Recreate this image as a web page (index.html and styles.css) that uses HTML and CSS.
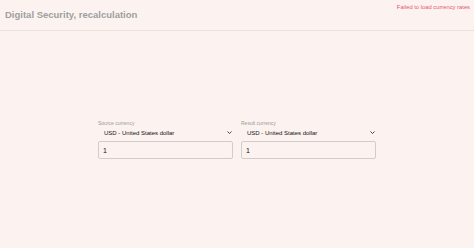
FILE: index.html
```html
<!DOCTYPE html>
<html lang="en">
<head>
<meta charset="UTF-8" />
<title>Digital Security, recalculation</title>
<link rel="stylesheet" href="styles.css">
</head>
<body>

<div class="page">
  <header class="top-bar">
    <h1 class="title">Digital Security, recalculation</h1>
    <div class="error-msg">Failed to load currency rates</div>
  </header>

  <main class="content">
    <form class="converter">
      <div class="field">
        <label class="field-label" for="srcCur">Source currency</label>
        <div class="select-wrap">
          <select id="srcCur" class="cur-select">
            <option>USD - United States dollar</option>
          </select>
          <svg class="chevron" viewBox="0 0 10 6" width="5" height="3"><path d="M1 1l4 4 4-4" fill="none" stroke="#333" stroke-width="1.8"/></svg>
        </div>
        <input class="amount" type="text" value="1">
      </div>
      <div class="field">
        <label class="field-label" for="resCur">Result currency</label>
        <div class="select-wrap">
          <select id="resCur" class="cur-select">
            <option>USD - United States dollar</option>
          </select>
          <svg class="chevron" viewBox="0 0 10 6" width="5" height="3"><path d="M1 1l4 4 4-4" fill="none" stroke="#333" stroke-width="1.8"/></svg>
        </div>
        <input class="amount" type="text" value="1">
      </div>
    </form>
  </main>
</div>

</body>
</html>
```

FILE: styles.css
```css
html, body { margin: 0; padding: 0; height: 100%; }
body {
  background: #fcf3f0;
  font-family: "Liberation Sans", Arial, sans-serif;
  color: #333;
}
.page {
  display: flex;
  flex-direction: column;
  height: 100%;
}
.top-bar {
  display: flex;
  justify-content: space-between;
  align-items: flex-start;
  height: 31px;
  padding: 0 4px 0 5px;
  border-bottom: 1px solid #ebe0dd;
  box-sizing: border-box;
  flex: none;
}
.title {
  margin: 0;
  padding-top: 9px;
  font-size: 9.5px;
  line-height: 12px;
  font-weight: bold;
  color: #a09e9e;
}
.error-msg {
  padding-top: 4px;
  font-size: 5.8px;
  line-height: 7px;
  color: #e8546a;
}
.content {
  flex: 1;
  display: flex;
  align-items: center;
  justify-content: center;
}
.converter {
  display: flex;
  gap: 8px;
}
.field {
  display: flex;
  flex-direction: column;
  width: 135px;
}
.field-label {
  font-size: 5px;
  line-height: 6px;
  color: #999;
  margin-bottom: 1px;
}
.select-wrap {
  position: relative;
  margin-bottom: 3px;
}
.cur-select {
  appearance: none;
  -webkit-appearance: none;
  display: block;
  width: 100%;
  font-family: inherit;
  font-size: 6px;
  height: 11px;
  padding: 0 6px;
  border: none;
  background: transparent;
  color: #111;
}
.chevron {
  position: absolute;
  right: 1px;
  top: 4px;
  pointer-events: none;
}
.amount {
  font-family: inherit;
  font-size: 7px;
  height: 18px;
  padding: 0 4px;
  border: 1px solid #d4cccb;
  border-radius: 2px;
  background: #fcf3f0;
  color: #111;
  box-sizing: border-box;
}
```
